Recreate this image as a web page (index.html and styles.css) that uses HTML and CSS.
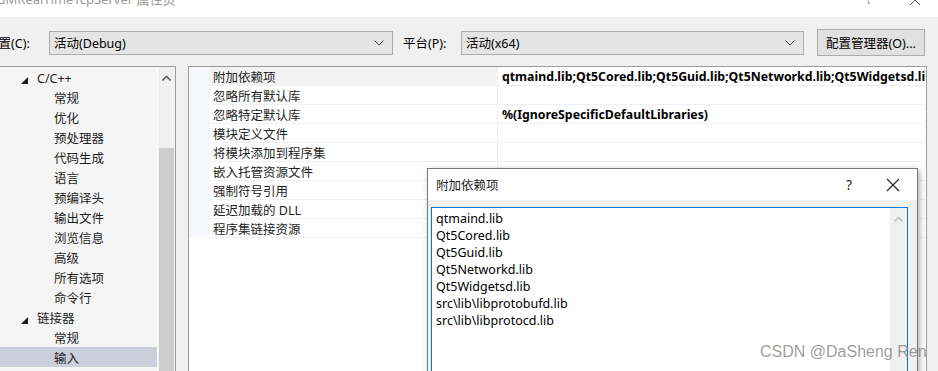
FILE: index.html
```html
<!DOCTYPE html>
<html lang="zh-CN">
<head>
    <meta charset="UTF-8">
    <title>GMRealTimeTcpServer 属性页</title>
    <link rel="stylesheet" href="styles.css">
</head>
<body>
<div class="window">
    <div class="titlebar">
        <span class="title">GMRealTimeTcpServer 属性页</span>
        <span class="tb-help">?</span>
        <svg class="tb-close" width="12" height="12" viewBox="0 0 12 12"><path d="M1 1L11 11M11 1L1 11" stroke="#555" stroke-width="1" fill="none"/></svg>
    </div>

    <div class="toolbar">
        <span class="lbl lbl-config">配置(C):</span>
        <div class="combo combo-config">
            <span>活动(Debug)</span>
            <svg width="10" height="6" viewBox="0 0 10 6"><path d="M0.5 0.5L5 5L9.5 0.5" stroke="#444" fill="none"/></svg>
        </div>
        <span class="lbl lbl-platform">平台(P):</span>
        <div class="combo combo-platform">
            <span>活动(x64)</span>
            <svg width="10" height="6" viewBox="0 0 10 6"><path d="M0.5 0.5L5 5L9.5 0.5" stroke="#444" fill="none"/></svg>
        </div>
        <button class="btn-manager">配置管理器(O)...</button>
    </div>

    <div class="main">
        <div class="tree">
            <ul class="tree-list">
                <li class="node"><svg class="tri" width="7" height="7" viewBox="0 0 7 7"><polygon points="7,0 7,7 0,7" fill="#1e1e1e"/></svg>C/C++</li>
                <li class="leaf">常规</li>
                <li class="leaf">优化</li>
                <li class="leaf">预处理器</li>
                <li class="leaf">代码生成</li>
                <li class="leaf">语言</li>
                <li class="leaf">预编译头</li>
                <li class="leaf">输出文件</li>
                <li class="leaf">浏览信息</li>
                <li class="leaf">高级</li>
                <li class="leaf">所有选项</li>
                <li class="leaf">命令行</li>
                <li class="node"><svg class="tri" width="7" height="7" viewBox="0 0 7 7"><polygon points="7,0 7,7 0,7" fill="#1e1e1e"/></svg>链接器</li>
                <li class="leaf">常规</li>
                <li class="leaf selected">输入</li>
            </ul>
            <div class="vscroll">
                <svg class="arrow-up" width="9" height="6" viewBox="0 0 9 6"><path d="M0.5 5.5L4.5 1.5L8.5 5.5" stroke="#606060" stroke-width="1.6" fill="none"/></svg>
                <div class="thumb"></div>
            </div>
        </div>

        <div class="grid">
            <div class="rows">
                <div class="row first"><div class="name">附加依赖项</div><div class="value">qtmaind.lib;Qt5Cored.lib;Qt5Guid.lib;Qt5Networkd.lib;Qt5Widgetsd.lib;src\lib\libprotobufd.lib;src\lib\libprotocd.lib</div></div>
                <div class="row"><div class="name">忽略所有默认库</div><div class="value"></div></div>
                <div class="row"><div class="name">忽略特定默认库</div><div class="value">%(IgnoreSpecificDefaultLibraries)</div></div>
                <div class="row"><div class="name">模块定义文件</div><div class="value"></div></div>
                <div class="row"><div class="name">将模块添加到程序集</div><div class="value"></div></div>
                <div class="row"><div class="name">嵌入托管资源文件</div><div class="value"></div></div>
                <div class="row"><div class="name">强制符号引用</div><div class="value"></div></div>
                <div class="row"><div class="name">延迟加载的 DLL</div><div class="value"></div></div>
                <div class="row"><div class="name">程序集链接资源</div><div class="value"></div></div>
            </div>
        </div>
        <div class="rest"></div>
    </div>

    <!-- popup editor for the selected property -->
    <div class="dialog">
        <div class="dlg-title">
            <span class="dlg-caption">附加依赖项</span>
            <span class="dlg-help">?</span>
            <svg class="dlg-close" width="14" height="14" viewBox="0 0 14 14"><path d="M1 1L13 13M13 1L1 13" stroke="#222" stroke-width="1.1" fill="none"/></svg>
        </div>
        <div class="dlg-body">
            <div class="editbox">
                <div class="lines">
                    <div>qtmaind.lib</div>
                    <div>Qt5Cored.lib</div>
                    <div>Qt5Guid.lib</div>
                    <div>Qt5Networkd.lib</div>
                    <div>Qt5Widgetsd.lib</div>
                    <div>src\lib\libprotobufd.lib</div>
                    <div>src\lib\libprotocd.lib</div>
                </div>
                <div class="edit-scroll">
                    <svg width="9" height="6" viewBox="0 0 9 6"><path d="M0.5 5.5L4.5 1.5L8.5 5.5" stroke="#c2c2c2" stroke-width="1.6" fill="none"/></svg>
                </div>
            </div>
        </div>
    </div>

    <div class="watermark">CSDN @DaSheng Ren</div>
</div>
</body>
</html>
```

FILE: styles.css
```css
* {
    box-sizing: border-box;
}
body {
    margin: 0;
    font-family: "Noto Sans", "Noto Sans CJK SC", sans-serif;
    font-size: 12px;
    color: #000;
    background: #f0f0f0;
}
.window {
    position: relative;
    width: 938px;
    height: 371px;
    overflow: hidden;
    background: #f0f0f0;
}

/* title bar, cut at the top */
.titlebar {
    position: relative;
    height: 17px;
    background: #fff;
    overflow: hidden;
}
.title {
    display: block;
    margin: -9px 0 0 -4px;
    color: #9a9a9a;
    font-size: 13px;
    line-height: 17px;
}
.tb-help {
    position: absolute;
    left: 866px;
    top: -11px;
    color: #888;
    font-size: 14px;
}
.tb-close {
    position: absolute;
    left: 909px;
    top: -6px;
}

/* configuration row */
.toolbar {
    height: 49px;
    display: flex;
    align-items: center;
    padding-top: 2px;
}
.lbl {
    font-size: 12.5px;
}
.lbl-config {
    margin-left: -14px;
    width: 63px;
}
.lbl-platform {
    margin-left: 10px;
    width: 58px;
}
.combo {
    height: 24px;
    border: 1px solid #adadad;
    background: #e5e5e5;
    display: flex;
    align-items: center;
    justify-content: space-between;
    padding: 0 8px 0 4px;
    font-size: 12.5px;
}
.combo-config {
    width: 344px;
}
.combo-platform {
    width: 343px;
}
.btn-manager {
    margin-left: 13px;
    width: 108px;
    height: 27px;
    border: 1px solid #adadad;
    background: #e1e1e1;
    font-family: "Noto Sans", "Noto Sans CJK SC", sans-serif;
    font-size: 12.5px;
    padding: 0;
    color: #000;
}

/* lower area */
.main {
    display: flex;
    height: 305px;
}
.tree {
    width: 177px;
    margin-left: -1px;
    border-top: 1px solid #9c9c9c;
    border-right: 1px solid #9c9c9c;
    border-left: 1px solid #9c9c9c;
    background: #f0f0f0;
    display: flex;
}
.tree-list {
    list-style: none;
    margin: 0;
    padding: 0;
    width: 158px;
    background: #f5f5f5;
    border-right: 1px solid #fff;
}
.tree-list li {
    height: 20px;
    padding-top: 2px;
    line-height: 20px;
    font-size: 12.5px;
    color: #1e1e1e;
    white-space: nowrap;
}
.tree-list .node {
    padding-left: 21px;
}
.tree-list .tri {
    margin-right: 9px;
    vertical-align: -1px;
}
.tree-list .leaf {
    padding-left: 54px;
}
.tree-list .selected {
    background: #cccedb;
}
.vscroll {
    width: 16px;
    display: flex;
    flex-direction: column;
    align-items: center;
    background: #f0f0f0;
}
.arrow-up {
    margin-top: 8px;
}
.thumb {
    margin-top: 67px;
    width: 15px;
    flex: 1;
    background: #cdcdcd;
}

.grid {
    margin-left: 12px;
    width: 739px;
    background: #fff;
    border-top: 1px solid #9c9c9c;
    border-left: 1px solid #9c9c9c;
    border-right: 1px solid #9c9c9c;
}
.rows {
    border-left: 21px solid #f5f7fc;
}
.row {
    display: flex;
    height: 19px;
    border-bottom: 1px solid #eef0f5;
    white-space: nowrap;
}
.row .name {
    width: 288px;
    padding-left: 3px;
    padding-top: 1px;
    line-height: 19px;
    font-size: 12.5px;
    color: #1e1e1e;
    border-right: 1px solid #eef0f5;
}
.row .value {
    flex: 1;
    overflow: hidden;
    padding-left: 4px;
    padding-top: 1px;
    line-height: 18px;
    font-weight: bold;
    font-size: 12.3px;
}
.row.first .name {
    background: #f3f3f3;
}
.rest {
    flex: 1;
}

/* popup editor */
.dialog {
    position: absolute;
    left: 427px;
    top: 168px;
    width: 491px;
    height: 220px;
    border: 1px solid #7a7a7a;
    background: #f0f0f0;
    box-shadow: 2px 2px 6px rgba(0, 0, 0, 0.3);
}
.dlg-title {
    height: 31px;
    background: #fff;
    display: flex;
    align-items: center;
    padding-left: 8px;
}
.dlg-caption {
    flex: 1;
    font-size: 12.5px;
    color: #1e1e1e;
}
.dlg-help {
    font-size: 14px;
    color: #222;
    margin-right: 34px;
}
.dlg-close {
    margin-right: 17px;
}
.dlg-body {
    padding: 7px 9px 0 3px;
}
.editbox {
    height: 180px;
    border: 1px solid #0078d7;
    background: #fff;
    display: flex;
}
.lines {
    flex: 1;
    padding: 2px 0 0 4px;
    font-size: 12.5px;
    line-height: 17px;
    color: #000;
}
.edit-scroll {
    width: 17px;
    background: #f0f0f0;
    display: flex;
    justify-content: center;
    padding-top: 8px;
}
.edit-scroll svg {
    display: block;
}

.watermark {
    position: absolute;
    left: 760px;
    top: 343px;
    font-family: "Liberation Sans", sans-serif;
    font-size: 16px;
    color: rgba(140, 140, 140, 0.85);
    white-space: nowrap;
}
```
